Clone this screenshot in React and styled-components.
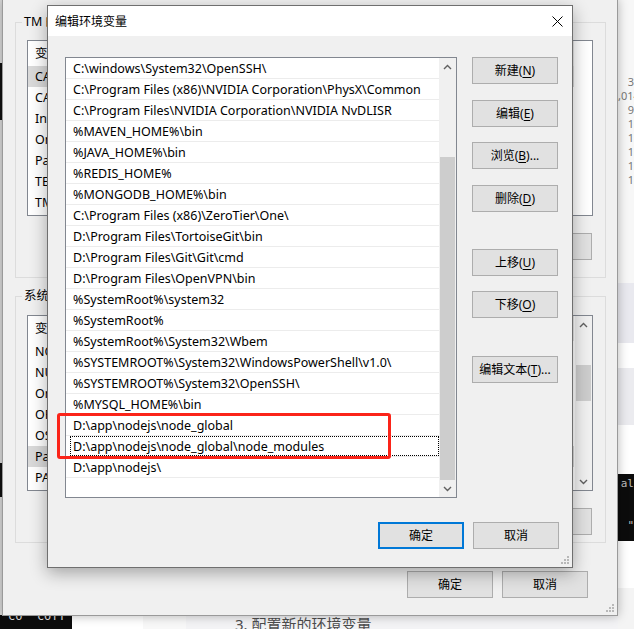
import React from 'react';
import styled, { createGlobalStyle } from 'styled-components';

const FONT = '"Noto Sans", "Noto Sans CJK SC", sans-serif';

const GlobalStyle = createGlobalStyle`
  html, body { margin: 0; padding: 0; background: #fff; overflow: hidden; }
  body { font-family: ${FONT}; }
  * { box-sizing: border-box; }
`;

const Stage = styled.div`
  position: relative;
  width: 634px;
  height: 629px;
  overflow: hidden;
  font-family: ${FONT};
`;

/* ---------- backdrop (web page behind the windows) ---------- */
const Backdrop = styled.div`
  display: grid;
  grid-template-columns: 2px 616px 16px;
  grid-template-rows: 615px 14px;
  width: 634px;
  height: 629px;
`;

const LeftEdge = styled.div`
  grid-column: 1;
  grid-row: 1;
  display: flex;
  flex-direction: column;
  background: #d6d6d6;
`;

const EdgePiece = styled.div`
  height: ${p => p.$h}px;
  flex: ${p => (p.$h ? 'none' : '1')};
  background: ${p => p.$c};
`;

const Covered = styled.div`
  grid-column: 2;
  grid-row: 1;
  background: #f0f0f0;
`;

const RightStrip = styled.div`
  grid-column: 3;
  grid-row: 1 / span 2;
  display: flex;
  flex-direction: column;
`;

const Band = styled.div`
  height: ${p => p.$h}px;
  flex: ${p => (p.$h ? 'none' : '1')};
  background: ${p => p.$c};
  color: ${p => p.$fg || '#777'};
  font-family: ${p => (p.$mono ? '"DejaVu Sans Mono", monospace' : FONT)};
  font-size: 11px;
  line-height: 14px;
  text-align: right;
  padding-top: ${p => p.$pt || 0}px;
  overflow: hidden;
  white-space: pre;
`;

const BottomStrip = styled.div`
  grid-column: 1 / span 2;
  grid-row: 2;
  display: flex;
  overflow: hidden;
`;

const Term = styled.div`
  width: 72px;
  background: #0c0c0c;
  color: #e8e8e8;
  font-family: "DejaVu Sans Mono", monospace;
  font-size: 12px;
  line-height: 12px;
  padding-left: 8px;
  white-space: pre;
  overflow: hidden;
`;

const TermText = styled.div`
  margin-top: -5px;
`;

const Seg = styled.div`
  width: ${p => p.$w}px;
  flex: ${p => (p.$w ? 'none' : '1')};
  background: ${p => p.$c};
  color: #4d4d4d;
  font-size: 15px;
  line-height: 18px;
  padding-left: ${p => p.$pl || 0}px;
  white-space: nowrap;
  overflow: hidden;
`;

/* ---------- shared controls ---------- */
const Btn = styled.button`
  width: 86px;
  height: 27px;
  margin: ${p => p.$mt || 0}px 0 0 0;
  padding: 0;
  background: #e1e1e1;
  border: ${p => (p.$primary ? '2px solid #0078d7' : '1px solid #adadad')};
  color: #000;
  font-family: ${FONT};
  font-size: 12px;
  line-height: 16px;
  flex: none;
  cursor: default;
`;

const Mn = styled.span`
  text-decoration: underline;
  text-underline-offset: 2px;
`;

const Chevron = ({ down }) => (
  <svg width="9" height="6" viewBox="0 0 9 6">
    <polyline
      points={down ? '1,1 4.5,4.5 8,1' : '1,5 4.5,1.5 8,5'}
      fill="none"
      stroke="#606060"
      strokeWidth="1.4"
    />
  </svg>
);

const ScrollBar = styled.div`
  width: 17px;
  flex: none;
  background: #f0f0f0;
  display: flex;
  flex-direction: column;
`;

const ScrollArrow = styled.div`
  height: 17px;
  flex: none;
  display: flex;
  align-items: center;
  justify-content: center;
`;

const ScrollGap = styled.div`
  height: ${p => p.$h}px;
  flex: ${p => (p.$h ? 'none' : '1')};
`;

const ScrollThumb = styled.div`
  height: ${p => p.$h}px;
  flex: none;
  margin: 0 1px;
  background: #cdcdcd;
`;

const Scroll = ({ before, thumb }) => (
  <ScrollBar>
    <ScrollArrow><Chevron /></ScrollArrow>
    <ScrollGap $h={before} />
    <ScrollThumb $h={thumb} />
    <ScrollGap />
    <ScrollArrow><Chevron down /></ScrollArrow>
  </ScrollBar>
);

/* ---------- back window (环境变量) ---------- */
const BackWindow = styled.div`
  position: absolute;
  left: 2px;
  top: -1px;
  width: 616px;
  height: 617px;
  background: #f0f0f0;
  border: 1px solid #9a9a9a;
  box-shadow: 0 0 10px rgba(0, 0, 0, 0.28);
  display: flex;
  flex-direction: column;
`;

const GroupBox = styled.div`
  position: relative;
  margin: ${p => p.$mt}px 0 0 12px;
  width: 591px;
  height: ${p => p.$h}px;
  border: 1px solid #dcdcdc;
  padding: 0 12px 0 11px;
  display: flex;
  flex-direction: column;
`;

const GroupLegend = styled.span`
  position: absolute;
  left: 6px;
  top: -9px;
  padding: 0 2px;
  background: #f0f0f0;
  font-size: 12.5px;
  line-height: 16px;
  color: #000;
`;

const VarList = styled.div`
  margin-top: ${p => p.$mt}px;
  width: 566px;
  height: 176px;
  border: 1px solid #828790;
  background: #fff;
  display: flex;
`;

const VarCol = styled.div`
  flex: 1;
  display: flex;
  flex-direction: column;
`;

const VarHeader = styled.div`
  height: 25px;
  display: flex;
  font-size: 12.5px;
  line-height: 25px;
`;

const VarHeadCell = styled.div`
  width: ${p => p.$w}px;
  flex: none;
  padding-left: 7px;
  border-right: 1px solid #e5e5e5;
`;

const VarRow = styled.div`
  height: 21px;
  display: flex;
  font-size: 12.5px;
  line-height: 21px;
`;

const VarCell = styled.div`
  width: ${p => p.$w}px;
  flex: none;
  padding-left: 7px;
  white-space: nowrap;
  overflow: hidden;
  background: ${p => (p.$sel ? '#d9d9d9' : 'transparent')};
`;

const GroupButtons = styled.div`
  margin-top: 17px;
  display: flex;
  justify-content: flex-end;
  gap: 9px;
  padding-right: 1px;
`;

const BackFooter = styled.div`
  margin-top: 28px;
  display: flex;
  justify-content: flex-end;
  gap: 9px;
  padding-right: 29px;
`;

/* ---------- front window (编辑环境变量) ---------- */
const FrontWindow = styled.div`
  position: absolute;
  left: 47px;
  top: 5px;
  width: 526px;
  height: 563px;
  background: #f0f0f0;
  border: 1px solid #6f6f6f;
  box-shadow: 0 5px 16px rgba(0, 0, 0, 0.32);
  display: flex;
  flex-direction: column;
`;

const TitleBar = styled.div`
  height: 30px;
  flex: none;
  background: #fff;
  display: flex;
  align-items: center;
  justify-content: space-between;
  padding: 0 9px 0 7px;
  font-size: 12px;
  color: #000;
`;

const CloseIcon = () => (
  <svg width="11" height="11" viewBox="0 0 11 11">
    <path d="M0.5 0.5 L10.5 10.5 M10.5 0.5 L0.5 10.5" stroke="#000" strokeWidth="1" />
  </svg>
);

const Body = styled.div`
  padding: 21px 13px 0 17px;
  display: flex;
  flex-direction: column;
`;

const MainRow = styled.div`
  display: flex;
  gap: 15px;
`;

const PathList = styled.div`
  width: 392px;
  height: 441px;
  border: 1px solid #828790;
  background: #fff;
  display: flex;
`;

const Rows = styled.div`
  flex: 1;
  display: flex;
  flex-direction: column;
`;

const PathRow = styled.div`
  height: 21px;
  flex: none;
  border-bottom: 1px solid #ececec;
  padding-left: 4px;
  display: flex;
`;

const PathText = styled.div`
  flex: 1;
  padding: 1px 0 0 2px;
  font-size: 12.5px;
  line-height: 17px;
  color: #000;
  white-space: nowrap;
  overflow: hidden;
  border: 1px ${p => (p.$focus ? 'dotted #000' : 'solid transparent')};
`;

const SideButtons = styled.div`
  display: flex;
  flex-direction: column;
`;

const Footer = styled.div`
  margin-top: 24px;
  display: flex;
  justify-content: flex-end;
  gap: 9px;
`;

const Grip = styled.svg`
  position: absolute;
  right: ${p => p.$r}px;
  bottom: ${p => p.$b}px;
`;

const GripIcon = ({ r, b }) => (
  <Grip $r={r} $b={b} width="8" height="8" viewBox="0 0 8 8">
    {[[6, 0], [3, 3], [6, 3], [0, 6], [3, 6], [6, 6]].map(([x, y], i) => (
      <rect key={i} x={x} y={y} width="2" height="2" fill="#b8b8b8" />
    ))}
  </Grip>
);

const Annotation = styled.div`
  position: absolute;
  left: 57px;
  top: 413px;
  width: 334px;
  height: 46px;
  border: 3px solid #fb2419;
  border-radius: 3px;
  pointer-events: none;
`;

const PATHS = [
  'C:\\windows\\System32\\OpenSSH\\',
  'C:\\Program Files (x86)\\NVIDIA Corporation\\PhysX\\Common',
  'C:\\Program Files\\NVIDIA Corporation\\NVIDIA NvDLISR',
  '%MAVEN_HOME%\\bin',
  '%JAVA_HOME%\\bin',
  '%REDIS_HOME%',
  '%MONGODB_HOME%\\bin',
  'C:\\Program Files (x86)\\ZeroTier\\One\\',
  'D:\\Program Files\\TortoiseGit\\bin',
  'D:\\Program Files\\Git\\Git\\cmd',
  'D:\\Program Files\\OpenVPN\\bin',
  '%SystemRoot%\\system32',
  '%SystemRoot%',
  '%SystemRoot%\\System32\\Wbem',
  '%SYSTEMROOT%\\System32\\WindowsPowerShell\\v1.0\\',
  '%SYSTEMROOT%\\System32\\OpenSSH\\',
  '%MYSQL_HOME%\\bin',
  'D:\\app\\nodejs\\node_global',
  'D:\\app\\nodejs\\node_global\\node_modules',
  'D:\\app\\nodejs\\',
];

const USER_VARS = [
  ['CATALINA_BASE', 'D:\\apache-tomcat', true],
  ['CATALINA_HOME', 'D:\\apache-tomcat'],
  ['IntelliJ IDEA', 'D:\\IntelliJ IDEA\\bin;'],
  ['OneDrive', 'C:\\Users\\TM\\OneDrive'],
  ['Path', 'C:\\Users\\TM\\AppData\\Local\\Microsoft\\WindowsApps;'],
  ['TEMP', 'C:\\Users\\TM\\AppData\\Local\\Temp'],
  ['TMP', 'C:\\Users\\TM\\AppData\\Local\\Temp'],
];

const SYS_VARS = [
  ['NODE_PATH', 'D:\\app\\nodejs\\node_global\\node_modules'],
  ['NUMBER_OF_PROCESSORS', '8'],
  ['OnlineServices', 'Online Services'],
  ['OPENSSL_CONF', 'C:\\OpenSSL\\bin\\openssl.cfg'],
  ['OS', 'Windows_NT'],
  ['Path', 'C:\\windows\\System32\\OpenSSH\\;...', true],
  ['PATHEXT', '.COM;.EXE;.BAT;.CMD;.VBS;.VBE;.JS'],
];

const VarTable = ({ mt, rows, scroll }) => (
  <VarList $mt={mt}>
    <VarCol>
      <VarHeader>
        <VarHeadCell $w={180}>变量</VarHeadCell>
        <VarHeadCell $w={366}>值</VarHeadCell>
      </VarHeader>
      {rows.map(([n, v, sel]) => (
        <VarRow key={n}>
          <VarCell $w={180} $sel={sel}>{n}</VarCell>
          <VarCell $w={366} $sel={sel}>{v}</VarCell>
        </VarRow>
      ))}
    </VarCol>
    {scroll && <Scroll before={32} thumb={36} />}
  </VarList>
);

export default function App() {
  return (
    <Stage>
      <GlobalStyle />
      <Backdrop>
        <LeftEdge>
          <EdgePiece $h={63} $c="#dadada" />
          <EdgePiece $h={57} $c="#111" />
          <EdgePiece $h={343} $c="#dadada" />
          <EdgePiece $h={34} $c="#111" />
          <EdgePiece $c="#dadada" />
        </LeftEdge>
        <Covered />
        <RightStrip>
          <Band $h={283} $c="#f7f7f7" $pt={75}>
            {'3\n,014\n9\n1\n1\n1\n1\n1'}
          </Band>
          <Band $h={60} $c="#e9e9ef" />
          <Band $h={25} $c="#ffffff" />
          <Band $h={57} $c="#ebebef" />
          <Band $h={49} $c="#ffffff" />
          <Band $h={67} $c="#0c0c0c" $fg="#bdbdbd" $mono $pt={3}>
            {'al\n\n\n"'}
          </Band>
          <Band $h={47} $c="#ffffff" />
          <Band $c="#f4f4f4" />
        </RightStrip>
        <BottomStrip>
          <Term><TermText>{'co  coff'}</TermText></Term>
          <Seg $w={71} $c="#ffffff" />
          <Seg $w={43} $c="#f8f8f8" />
          <Seg $c="#f3f3f5" $pl={49}>3. 配置新的环境变量</Seg>
        </BottomStrip>
      </Backdrop>

      <BackWindow>
        <GroupBox $mt={22} $h={256}>
          <GroupLegend>TM 的用户变量(U)</GroupLegend>
          <VarTable mt={17} rows={USER_VARS} />
          <GroupButtons>
            <Btn>新建(<Mn>N</Mn>)...</Btn>
            <Btn>编辑(<Mn>E</Mn>)...</Btn>
            <Btn>删除(<Mn>D</Mn>)</Btn>
          </GroupButtons>
        </GroupBox>
        <GroupBox $mt={18} $h={247}>
          <GroupLegend>系统变量(S)</GroupLegend>
          <VarTable mt={18} rows={SYS_VARS} scroll />
          <GroupButtons>
            <Btn>新建(<Mn>W</Mn>)...</Btn>
            <Btn>编辑(<Mn>I</Mn>)...</Btn>
            <Btn>删除(<Mn>L</Mn>)</Btn>
          </GroupButtons>
        </GroupBox>
        <BackFooter>
          <Btn>确定</Btn>
          <Btn>取消</Btn>
        </BackFooter>
        <GripIcon r={3} b={3} />
      </BackWindow>

      <FrontWindow>
        <TitleBar>
          <span>编辑环境变量</span>
          <CloseIcon />
        </TitleBar>
        <Body>
          <MainRow>
            <PathList>
              <Rows>
                {PATHS.map((p, i) => (
                  <PathRow key={p}>
                    <PathText $focus={i === 18}>{p}</PathText>
                  </PathRow>
                ))}
              </Rows>
              <Scroll before={82} thumb={323} />
            </PathList>
            <SideButtons>
              <Btn>新建(<Mn>N</Mn>)</Btn>
              <Btn $mt={16}>编辑(<Mn>E</Mn>)</Btn>
              <Btn $mt={15}>浏览(<Mn>B</Mn>)...</Btn>
              <Btn $mt={16}>删除(<Mn>D</Mn>)</Btn>
              <Btn $mt={37}>上移(<Mn>U</Mn>)</Btn>
              <Btn $mt={15}>下移(<Mn>O</Mn>)</Btn>
              <Btn $mt={38}>编辑文本(<Mn>T</Mn>)...</Btn>
            </SideButtons>
          </MainRow>
          <Footer>
            <Btn $primary>确定</Btn>
            <Btn>取消</Btn>
          </Footer>
        </Body>
        <GripIcon r={3} b={3} />
      </FrontWindow>

      <Annotation />
    </Stage>
  );
}
